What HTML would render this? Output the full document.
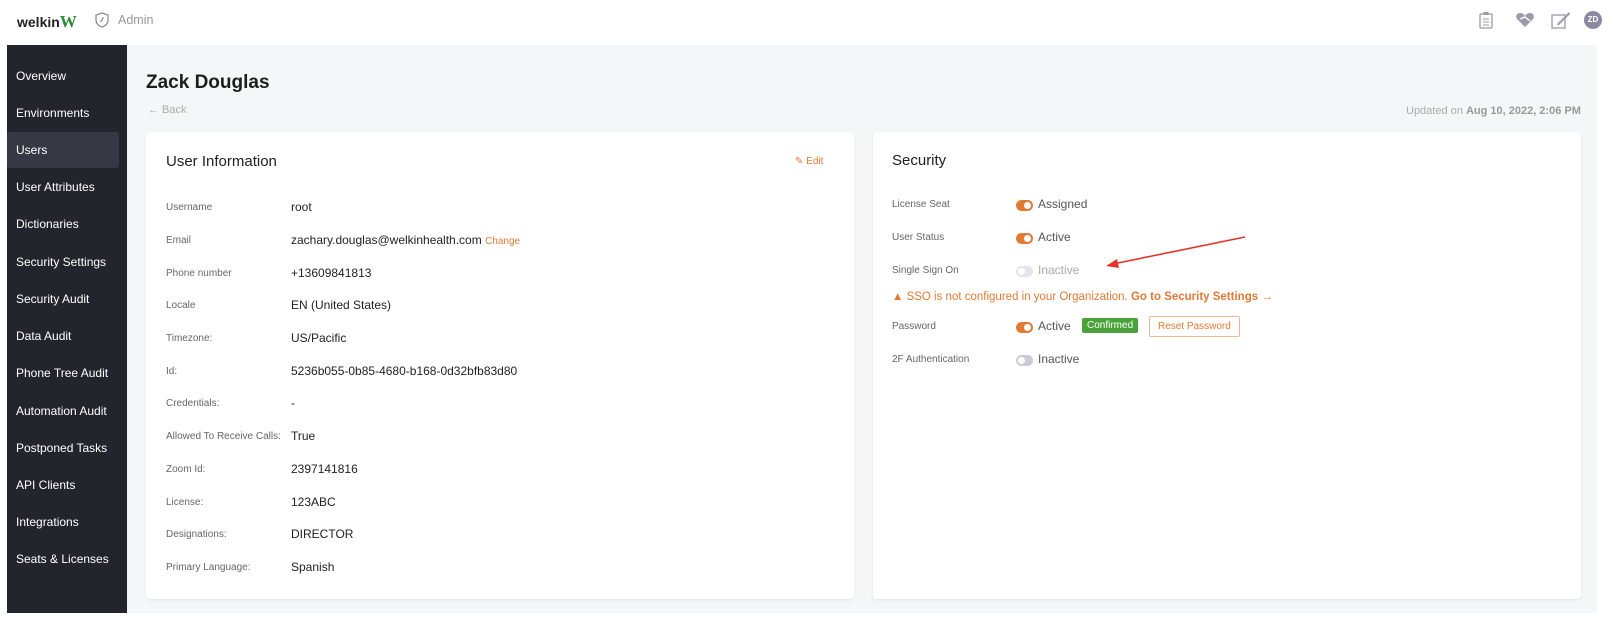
<!DOCTYPE html>
<html><head><meta charset="utf-8"><style>
*{box-sizing:border-box;margin:0;padding:0}
body{width:1616px;height:636px;background:#fff;font-family:"Liberation Sans",sans-serif;position:relative;overflow:hidden;color:#222}
.a{position:absolute;white-space:nowrap}
.side{position:absolute;left:7px;top:45px;width:120px;height:568px;background:#23252d}
.main{position:absolute;left:127px;top:45px;width:1470px;height:568px;background:#f5f6f8}
.si{position:absolute;left:9px;color:#fff;font-size:12px}
.card{position:absolute;background:#fff;border-radius:4px;box-shadow:0 1px 3px rgba(0,0,0,.08)}
.lb{font-size:10px;color:#666}
.v{font-size:12px;color:#222}
.tg{position:absolute;width:17px;height:11px;border-radius:6px;background:#e07a35}
.tg::after{content:"";position:absolute;right:2px;top:2px;width:7px;height:7px;border-radius:50%;background:#fff}
.tg.off{background:#e3e5ea}
.tg.off::after{left:2px;right:auto}
</style></head><body>
<div class="a" style="left:17px;top:12px;font-weight:bold;font-size:14px;color:#222">welkin<span style="color:#2e8b3a;font-family:'Liberation Serif',serif;font-size:17px">W</span></div>
<svg class="a" style="left:95px;top:12px" width="14" height="16" viewBox="0 0 14 16"><path d="M7 1 L13 3 V8 C13 12 10 14 7 15 C4 14 1 12 1 8 V3 Z" fill="none" stroke="#888" stroke-width="1.2"/><path d="M8.5 5.5 L5.5 10" stroke="#888" stroke-width="1.2"/></svg>
<div class="a" style="left:118px;top:13px;font-size:12.5px;color:#999">Admin</div>
<svg class="a" style="left:1479px;top:11px" width="14" height="18" viewBox="0 0 14 18"><rect x="1" y="3" width="12" height="14" rx="1" fill="none" stroke="#9a9aaa" stroke-width="1.3"/><rect x="4.5" y="1" width="5" height="3" fill="#9a9aaa"/><path d="M4 8h6M4 11h6M4 14h6" stroke="#9a9aaa"/></svg>
<svg class="a" style="left:1515px;top:12px" width="20" height="16" viewBox="0 0 20 16"><path d="M10 15 L2 7 C0 4 2 1 5 1 C7 1 9 2 10 4 C11 2 13 1 15 1 C18 1 20 4 18 7 Z" fill="#9a9aaa"/><path d="M5 7 L10 5 L15 9" stroke="#fff" stroke-width="1.3" fill="none"/></svg>
<svg class="a" style="left:1551px;top:11px" width="20" height="18" viewBox="0 0 20 18"><rect x="1" y="4" width="13" height="13" fill="none" stroke="#9a9aaa" stroke-width="1.3"/><path d="M7 12 L18 1 L19 3 L8 14 L6 14 Z" fill="#9a9aaa"/></svg>
<div class="a" style="left:1584px;top:11px;width:18px;height:18px;border-radius:50%;background:#8a8aa4;color:#fff;font-size:8px;font-weight:bold;text-align:center;line-height:18px">ZD</div>
<div class="side">
<div style="position:absolute;left:0;top:87px;width:112px;height:36px;background:#363944;border-radius:3px"></div>
<div class="si" style="top:24px">Overview</div>
<div class="si" style="top:61px">Environments</div>
<div class="si" style="top:98px">Users</div>
<div class="si" style="top:135px">User Attributes</div>
<div class="si" style="top:172px">Dictionaries</div>
<div class="si" style="top:210px">Security Settings</div>
<div class="si" style="top:247px">Security Audit</div>
<div class="si" style="top:284px">Data Audit</div>
<div class="si" style="top:321px">Phone Tree Audit</div>
<div class="si" style="top:359px">Automation Audit</div>
<div class="si" style="top:396px">Postponed Tasks</div>
<div class="si" style="top:433px">API Clients</div>
<div class="si" style="top:470px">Integrations</div>
<div class="si" style="top:507px">Seats &amp; Licenses</div>
</div>
<div class="main"></div>
<div class="a" style="left:146px;top:72px;font-size:19px;font-weight:bold;color:#1e1e1e">Zack Douglas</div>
<div class="a" style="left:148px;top:104px;font-size:11px;color:#aaa">← Back</div>
<div class="a" style="left:1406px;top:105px;font-size:11px;color:#aaa">Updated on <b style="color:#999">Aug 10, 2022, 2:06 PM</b></div>
<div class="card" style="left:146px;top:132px;width:708px;height:467px"></div>
<div class="card" style="left:873px;top:132px;width:708px;height:467px"></div>
<div class="a" style="left:166px;top:153px;font-size:15px;color:#222">User Information</div>
<div class="a" style="left:795px;top:156px;font-size:10px;color:#e07a35">✎ Edit</div>
<div class="a lb" style="left:166px;top:202px">Username</div><div class="a v" style="left:291px;top:200px">root</div>
<div class="a lb" style="left:166px;top:235px">Email</div><div class="a v" style="left:291px;top:233px">zachary.douglas@welkinhealth.com <span style="font-size:10px;color:#e07a35">Change</span></div>
<div class="a lb" style="left:166px;top:268px">Phone number</div><div class="a v" style="left:291px;top:266px">+13609841813</div>
<div class="a lb" style="left:166px;top:300px">Locale</div><div class="a v" style="left:291px;top:298px">EN (United States)</div>
<div class="a lb" style="left:166px;top:333px">Timezone:</div><div class="a v" style="left:291px;top:331px">US/Pacific</div>
<div class="a lb" style="left:166px;top:366px">Id:</div><div class="a v" style="left:291px;top:364px">5236b055-0b85-4680-b168-0d32bfb83d80</div>
<div class="a lb" style="left:166px;top:398px">Credentials:</div><div class="a v" style="left:291px;top:396px">-</div>
<div class="a lb" style="left:166px;top:431px">Allowed To Receive Calls:</div><div class="a v" style="left:291px;top:429px">True</div>
<div class="a lb" style="left:166px;top:464px">Zoom Id:</div><div class="a v" style="left:291px;top:462px">2397141816</div>
<div class="a lb" style="left:166px;top:497px">License:</div><div class="a v" style="left:291px;top:495px">123ABC</div>
<div class="a lb" style="left:166px;top:529px">Designations:</div><div class="a v" style="left:291px;top:527px">DIRECTOR</div>
<div class="a lb" style="left:166px;top:562px">Primary Language:</div><div class="a v" style="left:291px;top:560px">Spanish</div>
<div class="a" style="left:892px;top:152px;font-size:15px;color:#222">Security</div>
<div class="a lb" style="left:892px;top:199px">License Seat</div><div class="tg" style="left:1016px;top:200px"></div><div class="a v" style="left:1038px;top:197px;color:#555">Assigned</div>
<div class="a lb" style="left:892px;top:232px">User Status</div><div class="tg" style="left:1016px;top:233px"></div><div class="a v" style="left:1038px;top:230px;color:#555">Active</div>
<div class="a lb" style="left:892px;top:265px">Single Sign On</div><div class="tg off" style="left:1016px;top:266px"></div><div class="a v" style="left:1038px;top:263px;color:#aaa">Inactive</div>
<div class="a" style="left:892px;top:291px;font-size:11.5px;color:#e07a35">▲ SSO is not configured in your Organization. <b>Go to Security Settings</b> →</div>
<div class="a lb" style="left:892px;top:321px">Password</div><div class="tg" style="left:1016px;top:322px"></div><div class="a v" style="left:1038px;top:319px;color:#555">Active</div>
<div class="a" style="left:1082px;top:318px;background:#4aa33a;color:#fff;font-size:10px;padding:2px 5px;border-radius:2px">Confirmed</div>
<div class="a" style="left:1149px;top:316px;border:1px solid #e8b898;color:#e07a35;font-size:10px;padding:4px 8px;border-radius:2px">Reset Password</div>
<div class="a lb" style="left:892px;top:354px">2F Authentication</div><div class="tg off" style="left:1016px;top:355px;background:#c9ccd6"></div><div class="a v" style="left:1038px;top:352px;color:#555">Inactive</div>
<svg class="a" style="left:1095px;top:230px" width="160" height="45"><line x1="150" y1="7" x2="18" y2="34" stroke="#e53326" stroke-width="1.6"/><path d="M11 36 L22 29 L24 38 Z" fill="#e53326"/></svg>
</body></html>
